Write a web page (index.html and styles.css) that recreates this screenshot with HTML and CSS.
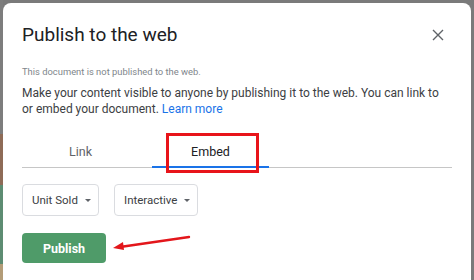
FILE: index.html
```html
<!DOCTYPE html>
<html lang="en">
<head>
    <meta charset="UTF-8">
    <title>Publish to the web</title>
    <link rel="stylesheet" href="styles.css">
</head>
<body>
    <div class="dialog">
        <!-- Header -->
        <div class="dialog-head">
            <h1 class="title">Publish to the web</h1>
            <button class="close" aria-label="Close">
                <svg width="12" height="12" viewBox="0 0 12 12"><path d="M1 1 L11 11 M11 1 L1 11" stroke="#5f6368" stroke-width="1.4" fill="none"/></svg>
            </button>
        </div>

        <p class="status">This document is not published to the web.</p>
        <p class="intro">Make your content visible to anyone by publishing it to the web. You can link to or embed your document. <a href="#">Learn more</a></p>

        <!-- Tabs -->
        <div class="tabs">
            <div class="tab">Link</div>
            <div class="tab active">Embed</div>
            <div class="highlight"></div>
        </div>

        <!-- Options -->
        <div class="options">
            <div class="select sheet-select">Unit Sold <span class="caret"></span></div>
            <div class="select mode-select">Interactive <span class="caret"></span></div>
        </div>

        <div class="actions">
            <button class="publish">Publish</button>
            <svg class="arrow" width="80" height="16" viewBox="0 0 80 16">
                <path d="M77 2 L8 12" stroke="#e3161b" stroke-width="2.4" fill="none" stroke-linecap="round"/>
                <path d="M1 13 L11 7 L12 15 Z" fill="#e3161b"/>
            </svg>
        </div>
    </div>
</body>
</html>
```

FILE: styles.css
```css
/* Page behind the dialog */
body {
    margin: 0;
    height: 280px;
    overflow: hidden;
    font-family: Roboto, "Liberation Sans", sans-serif;
    background-color: #7a7a7a;
    background-image: linear-gradient(to bottom, #7d7d7d 0, #7d7d7d 134px, #8e6b57 134px, #8e6b57 185px, #5d8c72 185px, #5d8c72 264px, #b39c78 264px);
    background-size: 3px 100%;
    background-repeat: no-repeat;
}

/* Dialog box */
.dialog {
    margin: 3px 3px 0 3px;
    height: 277px;
    background: #fff;
    border-radius: 8px 8px 0 0;
    padding: 0 19px;
    box-sizing: border-box;
    position: relative;
}

.dialog-head {
    display: flex;
    justify-content: space-between;
    align-items: center;
    padding-top: 19px;
}

.title {
    margin: 0;
    font-size: 19px;
    font-weight: 400;
    color: #202124;
    line-height: 26px;
}

.close {
    border: none;
    background: none;
    padding: 0;
    margin-right: 8px;
    display: flex;
}

.status {
    margin: 17px 0 0;
    font-size: 9.4px;
    color: #80868b;
    line-height: 14px;
}

.intro {
    margin: 6px 0 0;
    font-size: 12px;
    line-height: 16px;
    color: #3c4043;
}

.intro a {
    color: #1a73e8;
    text-decoration: none;
}

/* Tabs */
.tabs {
    display: flex;
    gap: 13px;
    margin-top: 26px;
    border-bottom: 1px solid #c6c6c6;
    position: relative;
}

.tab {
    width: 117px;
    text-align: center;
    font-size: 12.5px;
    color: #5f6368;
    padding-bottom: 6px;
    line-height: 18px;
}

.tab.active {
    color: #202124;
    box-shadow: inset 0 -2px 0 #1a73e8;
    margin-bottom: -1px;
    padding-bottom: 7px;
}

/* red annotation box */
.highlight {
    position: absolute;
    left: 144px;
    top: -10px;
    width: 87px;
    height: 34px;
    border: 3px solid #e8141a;
}

/* Dropdowns */
.options {
    display: flex;
    gap: 15px;
    margin-top: 16px;
}

.select {
    height: 32px;
    box-sizing: border-box;
    border: 1px solid #dadce0;
    border-radius: 4px;
    display: flex;
    align-items: center;
    justify-content: space-between;
    padding: 0 7px 0 9px;
    font-size: 11.5px;
    color: #3c4043;
    white-space: nowrap;
}

.sheet-select {
    width: 77px;
}

.mode-select {
    width: 84px;
}

.caret {
    width: 0;
    height: 0;
    border-left: 3.5px solid transparent;
    border-right: 3.5px solid transparent;
    border-top: 3.5px solid #5f6368;
}

/* Publish */
.actions {
    margin-top: 17px;
    display: flex;
    align-items: flex-start;
    position: relative;
}

.publish {
    width: 84px;
    height: 30px;
    border: none;
    border-radius: 4px;
    background: #4f9b69;
    color: #fff;
    font-family: Roboto, "Liberation Sans", sans-serif;
    font-weight: 700;
    font-size: 12.5px;
}

.arrow {
    position: absolute;
    left: 90px;
    top: 2px;
}
```
